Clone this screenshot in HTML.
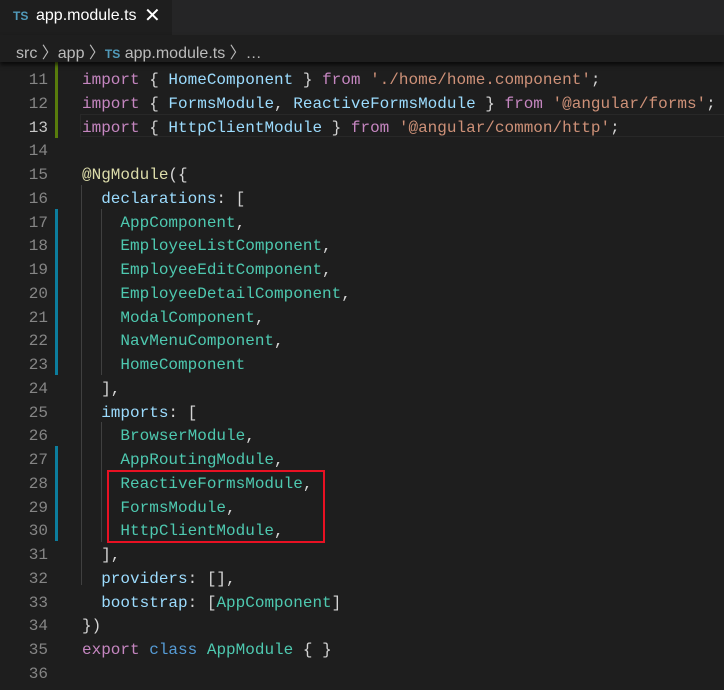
<!DOCTYPE html>
<html><head><style>
body{margin:0;width:724px;height:688px;background:#1e1e1e;overflow:hidden;font-family:"Liberation Sans",sans-serif;position:relative}
.tabbar{position:absolute;left:0;top:0;width:724px;height:35px;background:#252526}
.tab{position:absolute;left:0;top:0;width:172px;height:35px;background:#1e1e1e;color:#fff;font-size:16px}
.ts{color:#519aba;font-weight:bold;font-size:12px;font-family:"Liberation Sans",sans-serif}
.bc{position:absolute;left:0;top:35px;width:724px;height:27px;background:#1e1e1e;color:#bbb;font-size:16px;box-shadow:0 3px 4px #000a;z-index:3}
.wrap{position:absolute;left:0;top:2px;width:724px;height:688px}
.line{position:absolute;left:0;height:23.75px;width:724px;font-family:"Liberation Mono",monospace;font-size:16px;line-height:23.75px;white-space:pre;color:#d4d4d4}
.ln{position:absolute;left:0;width:48px;text-align:right;color:#858585}
.code{position:absolute;left:82px}
.k{color:#c586c0}.b{color:#569cd6}.v{color:#9cdcfe}.s{color:#ce9178}.t{color:#4ec9b0}.f{color:#dcdcaa}
.bar{position:absolute;left:55px;width:3px}
.guide{position:absolute;width:1px;background:#404040}
</style></head><body>
<div class="tabbar"><div class="tab"><span class="ts" style="position:absolute;left:13px;top:9px">TS</span><span style="position:absolute;left:36px;top:7px">app.module.ts</span><span style="position:absolute;left:144px;top:3px;font-size:20px">✕</span></div></div>
<div class="bc"><span style="position:absolute;left:16px;top:4px">src 〉app 〉<span class="ts">TS</span> app.module.ts 〉…</span></div>
<div class="wrap">
<div class="bar" style="top:60px;height:76px;background:#587c0c"></div>
<div class="bar" style="top:207px;height:166px;background:#0c7d9d"></div>
<div class="bar" style="top:444px;height:95px;background:#0c7d9d"></div>
<div class="guide" style="left:81px;top:183px;height:400px"></div>
<div class="guide" style="left:101px;top:207px;height:166px"></div>
<div class="guide" style="left:101px;top:420px;height:120px"></div>
<div style="position:absolute;left:80px;top:112px;width:644px;height:21px;border:1px solid #282828"></div>

<div class="line" style="top:67px"><span class="ln">11</span><span class="code"><span class="k">import</span> { <span class="v">HomeComponent</span> } <span class="k">from</span> <span class="s">'./home/home.component'</span>;</span></div>
<div class="line" style="top:90.75px"><span class="ln">12</span><span class="code"><span class="k">import</span> { <span class="v">FormsModule</span>, <span class="v">ReactiveFormsModule</span> } <span class="k">from</span> <span class="s">'@angular/forms'</span>;</span></div>
<div class="line" style="top:114.5px"><span class="ln" style="color:#c6c6c6">13</span><span class="code"><span class="k">import</span> { <span class="v">HttpClientModule</span> } <span class="k">from</span> <span class="s">'@angular/common/http'</span>;</span></div>
<div class="line" style="top:138.25px"><span class="ln">14</span></div>
<div class="line" style="top:162px"><span class="ln">15</span><span class="code"><span class="f">@NgModule</span>({</span></div>
<div class="line" style="top:185.75px"><span class="ln">16</span><span class="code">  <span class="v">declarations</span>: [</span></div>
<div class="line" style="top:209.5px"><span class="ln">17</span><span class="code">    <span class="t">AppComponent</span>,</span></div>
<div class="line" style="top:233.25px"><span class="ln">18</span><span class="code">    <span class="t">EmployeeListComponent</span>,</span></div>
<div class="line" style="top:257px"><span class="ln">19</span><span class="code">    <span class="t">EmployeeEditComponent</span>,</span></div>
<div class="line" style="top:280.75px"><span class="ln">20</span><span class="code">    <span class="t">EmployeeDetailComponent</span>,</span></div>
<div class="line" style="top:304.5px"><span class="ln">21</span><span class="code">    <span class="t">ModalComponent</span>,</span></div>
<div class="line" style="top:328.25px"><span class="ln">22</span><span class="code">    <span class="t">NavMenuComponent</span>,</span></div>
<div class="line" style="top:352px"><span class="ln">23</span><span class="code">    <span class="t">HomeComponent</span></span></div>
<div class="line" style="top:375.75px"><span class="ln">24</span><span class="code">  ],</span></div>
<div class="line" style="top:399.5px"><span class="ln">25</span><span class="code">  <span class="v">imports</span>: [</span></div>
<div class="line" style="top:423.25px"><span class="ln">26</span><span class="code">    <span class="t">BrowserModule</span>,</span></div>
<div class="line" style="top:447px"><span class="ln">27</span><span class="code">    <span class="t">AppRoutingModule</span>,</span></div>
<div class="line" style="top:470.75px"><span class="ln">28</span><span class="code">    <span class="t">ReactiveFormsModule</span>,</span></div>
<div class="line" style="top:494.5px"><span class="ln">29</span><span class="code">    <span class="t">FormsModule</span>,</span></div>
<div class="line" style="top:518.25px"><span class="ln">30</span><span class="code">    <span class="t">HttpClientModule</span>,</span></div>
<div class="line" style="top:542px"><span class="ln">31</span><span class="code">  ],</span></div>
<div class="line" style="top:565.75px"><span class="ln">32</span><span class="code">  <span class="v">providers</span>: [],</span></div>
<div class="line" style="top:589.5px"><span class="ln">33</span><span class="code">  <span class="v">bootstrap</span>: [<span class="t">AppComponent</span>]</span></div>
<div class="line" style="top:613.25px"><span class="ln">34</span><span class="code">})</span></div>
<div class="line" style="top:637px"><span class="ln">35</span><span class="code"><span class="k">export</span> <span class="b">class</span> <span class="t">AppModule</span> { }</span></div>
<div class="line" style="top:660.75px"><span class="ln">36</span></div>
</div>
<div style="position:absolute;left:107px;top:470px;width:214px;height:69px;border:2px solid #e81123"></div>
</body></html>
